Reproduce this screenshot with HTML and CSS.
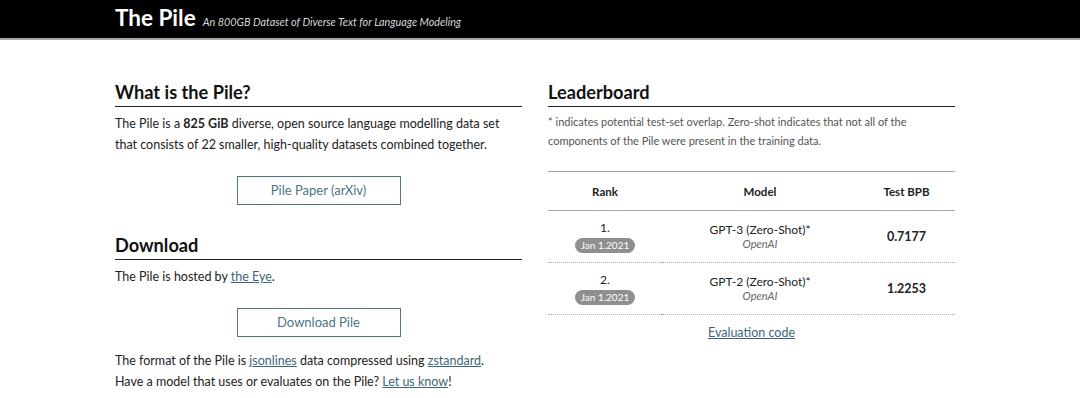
FILE: index.html
```html
<!DOCTYPE html>
<html lang="en">
<head>
  <meta charset="UTF-8">
  <title>The Pile</title>
  <link rel="stylesheet" href="styles.css">
</head>
<body>

  <div class="topbar">
    <div class="topbar-inner">
      <span class="brand">The Pile</span>
      <span class="tagline">An 800GB Dataset of Diverse Text for Language Modeling</span>
    </div>
  </div>

  <div class="page">
    <!-- Left column -->
    <div class="col">
      <h2>What is the Pile?</h2>
      <p>The Pile is a <b>825 GiB</b> diverse, open source language modelling data set that consists of 22 smaller, high-quality datasets combined together.</p>
      <div class="btn-row"><a class="btn" href="#">Pile Paper (arXiv)</a></div>

      <h2 class="download">Download</h2>
      <p>The Pile is hosted by <a href="#">the Eye</a>.</p>
      <div class="btn-row"><a class="btn" href="#">Download Pile</a></div>
      <p class="format">The format of the Pile is <a href="#">jsonlines</a> data compressed using <a href="#">zstandard</a>.<br>
      Have a model that uses or evaluates on the Pile? <a href="#">Let us know</a>!</p>
    </div>

    <!-- Right column -->
    <div class="col">
      <h2>Leaderboard</h2>
      <p class="note">* indicates potential test-set overlap. Zero-shot indicates that not all of the components of the Pile were present in the training data.</p>

      <table class="board">
        <thead>
          <tr><th class="rank">Rank</th><th>Model</th><th class="score">Test BPB</th></tr>
        </thead>
        <tbody>
          <tr>
            <td class="rank">1.<br><span class="date">Jan 1.2021</span></td>
            <td>GPT-3 (Zero-Shot)*<br><span class="org">OpenAI</span></td>
            <td class="score"><b>0.7177</b></td>
          </tr>
          <tr>
            <td class="rank">2.<br><span class="date">Jan 1.2021</span></td>
            <td>GPT-2 (Zero-Shot)*<br><span class="org">OpenAI</span></td>
            <td class="score"><b>1.2253</b></td>
          </tr>
        </tbody>
      </table>
      <div class="eval"><a href="#">Evaluation code</a></div>
    </div>
  </div>

</body>
</html>
```

FILE: styles.css
```css
body {
  margin: 0;
  font-family: Lato, "Open Sans", sans-serif;
  color: #222;
  background: #fff;
}

.topbar {
  background: #000;
  height: 38px;
  border-bottom: 2px solid #a8a8a8;
}

.topbar-inner {
  margin-left: 115px;
  display: flex;
  align-items: baseline;
  height: 38px;
  line-height: 36px;
}

.brand {
  color: #fff;
  font-weight: bold;
  font-size: 22.5px;
}

.tagline {
  color: #d8d8d8;
  font-style: italic;
  font-size: 10.8px;
  margin-left: 7px;
}

.page {
  margin-left: 115px;
  width: 840px;
  display: flex;
  gap: 26px;
  padding-top: 41px;
}

.col {
  width: 407px;
}

h2 {
  margin: 0;
  font-size: 18.2px;
  line-height: 23px;
  padding-bottom: 2px;
  border-bottom: 1.5px solid #222;
  color: #111;
}

p {
  margin: 6px 0 0;
  font-size: 12.5px;
  line-height: 21px;
}

b {
  font-weight: bold;
}

a {
  color: #3d6778;
}

.btn-row {
  display: flex;
  justify-content: center;
  margin-top: 21px;
}

.btn {
  display: block;
  width: 162px;
  height: 27px;
  line-height: 27px;
  text-align: center;
  border: 1px solid #4c7486;
  color: #4c7486;
  font-size: 13px;
  text-decoration: none;
}

h2.download {
  margin-top: 29px;
}

.format {
  margin-top: 13px;
}

.note {
  margin-top: 5px;
  font-size: 11px;
  line-height: 19px;
  color: #555;
}

.board {
  width: 100%;
  margin-top: 21px;
  border-collapse: collapse;
  font-size: 12px;
  text-align: center;
}

.board th {
  height: 36px;
  font-weight: bold;
  font-size: 11.5px;
  border-top: 1px solid #a6a6a6;
  border-bottom: 1px solid #a6a6a6;
}

.board td {
  height: 49px;
  border-bottom: 1px dotted #aaa;
  line-height: 14px;
}

.board .rank {
  width: 112px;
}

.board .score {
  width: 95px;
}

.board td.score {
  font-size: 12.5px;
}

.date {
  display: inline-block;
  background: #8f8f8f;
  color: #fff;
  font-size: 10px;
  line-height: 15px;
  padding: 0 6px;
  border-radius: 8px;
  margin-top: 3px;
}

.org {
  font-style: italic;
  color: #666;
  font-size: 11px;
}

.eval {
  text-align: center;
  margin-top: 10px;
  font-size: 12.5px;
}
```
